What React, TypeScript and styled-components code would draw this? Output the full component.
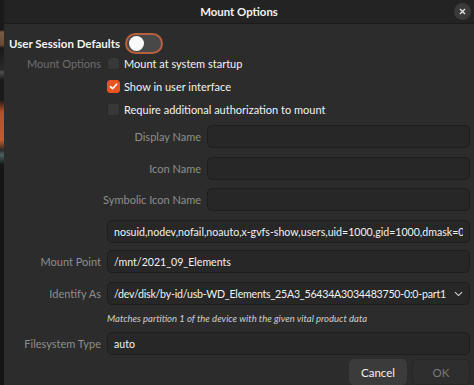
import styled, { createGlobalStyle } from "styled-components";

const Global = createGlobalStyle`
  html, body { margin: 0; padding: 0; background: #111; }
  body { font-family: Lato, "Noto Sans", sans-serif; }
`;

const Page = styled.div`
  display: flex;
  width: 474px;
  height: 385px;
  overflow: hidden;
`;

const Desktop = styled.div`
  width: 4px;
  flex: none;
  background: linear-gradient(
    to bottom,
    #1a1a1a 0px, #1a1a1a 30px,
    #7a5a40 32px, #6b4a35 45px,
    #1a1a1a 48px, #2a2a2a 70px,
    #505050 72px, #1a1a1a 80px,
    #1a1a1a 100px, #b0522a 112px,
    #c65a2b 140px, #2a2a2a 150px,
    #4a6060 155px, #151515 165px,
    #151515 100%
  );
`;

const Dialog = styled.div`
  flex: 1;
  display: flex;
  flex-direction: column;
  background: #2c2c2c;
  color: #f2f2f2;
  font-size: 11px;
`;

const Header = styled.div`
  height: 23px;
  flex: none;
  display: flex;
  align-items: center;
  justify-content: center;
  position: relative;
  background: #232323;
  border-bottom: 1px solid #1b1b1b;
  font-weight: 700;
  font-size: 11.4px;
`;

const CloseBtn = styled.div`
  position: absolute;
  right: 3px;
  top: 3px;
  width: 17px;
  height: 17px;
  border-radius: 50%;
  background: #3a3a3a;
  display: flex;
  align-items: center;
  justify-content: center;
`;

const Body = styled.div`
  display: flex;
  flex-direction: column;
  padding: 10px 4px 0 6px;
`;

const Defaults = styled.div`
  display: flex;
  align-items: center;
  gap: 7px;
  margin-left: -1px;
  height: 19px;
  font-weight: 700;
  font-size: 11.5px;
`;

const Switch = styled.div<{ $on?: boolean }>`
  width: 30px;
  height: 17px;
  border-radius: 10px;
  background: ${p => (p.$on ? "#e95420" : "#484848")};
  box-shadow: 0 0 0 2px #b8603c;
  display: flex;
  align-items: center;
  padding: 0 2px;
  justify-content: ${p => (p.$on ? "flex-end" : "flex-start")};
`;

const Knob = styled.div`
  width: 15px;
  height: 15px;
  border-radius: 50%;
  background: #fafafa;
`;

const Row = styled.div<{ $mt?: number; $h?: number }>`
  display: grid;
  grid-template-columns: 91px 94px 1fr;
  column-gap: 6px;
  align-items: center;
  margin-top: ${p => p.$mt ?? 0}px;
  height: ${p => p.$h ?? 23}px;
`;

const Label = styled.div<{ $dim?: boolean; $col?: number }>`
  grid-column: ${p => p.$col ?? 1};
  justify-self: end;
  color: ${p => (p.$dim ? "#6e6e6e" : "#8e8e8e")};
  white-space: nowrap;
`;

const Check = styled.label`
  grid-column: 2 / 4;
  display: flex;
  align-items: center;
  gap: 4px;
  white-space: nowrap;
`;

const Box = styled.span<{ $checked?: boolean }>`
  width: 11px;
  height: 11px;
  border-radius: 3px;
  background: ${p => (p.$checked ? "#e95420" : "#383838")};
  border: 1px solid ${p => (p.$checked ? "#e95420" : "#2a2a2a")};
  display: flex;
  align-items: center;
  justify-content: center;
`;

const Entry = styled.div<{ $span?: boolean }>`
  grid-column: ${p => (p.$span ? "2 / 4" : "3")};
  height: 23px;
  box-sizing: border-box;
  border-radius: 5px;
  background: #272727;
  border: 1px solid #1e1e1e;
  display: flex;
  align-items: center;
  padding: 0 6px;
  white-space: nowrap;
  overflow: hidden;
  gap: 4px;
`;

const EntryText = styled.span<{ $tight?: boolean }>`
  flex: 1;
  overflow: hidden;
  font-size: 10.6px;
  letter-spacing: ${p => (p.$tight ? "-0.22px" : "0")};
`;

const Note = styled.div`
  grid-column: 2 / 4;
  font-style: italic;
  font-size: 9.5px;
  color: #cfcfcf;
  white-space: nowrap;
`;

const Buttons = styled.div`
  display: flex;
  justify-content: flex-end;
  gap: 5px;
  margin-top: 4px;
`;

const Button = styled.div<{ $disabled?: boolean }>`
  width: 58px;
  height: 26px;
  box-sizing: border-box;
  border-radius: 5px;
  display: flex;
  align-items: center;
  justify-content: center;
  background: ${p => (p.$disabled ? "#2e2e2e" : "#3b3b3b")};
  border: 1px solid ${p => (p.$disabled ? "#262626" : "#3b3b3b")};
  color: ${p => (p.$disabled ? "#7a7a7a" : "#f2f2f2")};
  font-size: 11.5px;
`;

const Tick = () => (
  <svg width="9" height="9" viewBox="0 0 9 9">
    <path d="M1.5 4.6 L3.6 6.7 L7.6 2.2" fill="none" stroke="#fff" strokeWidth="1.6" strokeLinecap="round" strokeLinejoin="round" />
  </svg>
);

const Chevron = () => (
  <svg width="9" height="6" viewBox="0 0 9 6">
    <path d="M1 1.2 L4.5 4.6 L8 1.2" fill="none" stroke="#d8d8d8" strokeWidth="1.1" />
  </svg>
);

export default function App() {
  return (
    <Page>
      <Global />
      <Desktop />
      <Dialog>
        <Header>
          Mount Options
          <CloseBtn>
            <svg width="7" height="7" viewBox="0 0 7 7">
              <path d="M1 1 L6 6 M6 1 L1 6" stroke="#e8e8e8" strokeWidth="1.3" />
            </svg>
          </CloseBtn>
        </Header>
        <Body>
          <Defaults>
            User Session Defaults
            <Switch>
              <Knob />
            </Switch>
          </Defaults>
          <Row $mt={-1}>
            <Label $dim>Mount Options</Label>
            <Check>
              <Box />
              Mount at system startup
            </Check>
          </Row>
          <Row>
            <Check>
              <Box $checked>
                <Tick />
              </Box>
              Show in user interface
            </Check>
          </Row>
          <Row>
            <Check>
              <Box />
              Require additional authorization to mount
            </Check>
          </Row>
          <Row $mt={4}>
            <Label $col={2}>Display Name</Label>
            <Entry />
          </Row>
          <Row $mt={9}>
            <Label $col={2}>Icon Name</Label>
            <Entry />
          </Row>
          <Row $mt={8}>
            <Label $col={2}>Symbolic Icon Name</Label>
            <Entry />
          </Row>
          <Row $mt={9}>
            <Entry $span>
              <EntryText>nosuid,nodev,nofail,noauto,x-gvfs-show,users,uid=1000,gid=1000,dmask=027,fmask=137</EntryText>
            </Entry>
          </Row>
          <Row $mt={7}>
            <Label>Mount Point</Label>
            <Entry $span>
              <EntryText>/mnt/2021_09_Elements</EntryText>
            </Entry>
          </Row>
          <Row $mt={9}>
            <Label>Identify As</Label>
            <Entry $span>
              <EntryText $tight>/dev/disk/by-id/usb-WD_Elements_25A3_56434A3034483750-0:0-part1</EntryText>
              <Chevron />
            </Entry>
          </Row>
          <Row $h={27}>
            <Note>Matches partition 1 of the device with the given vital product data</Note>
          </Row>
          <Row>
            <Label>Filesystem Type</Label>
            <Entry $span>
              <EntryText>auto</EntryText>
            </Entry>
          </Row>
          <Buttons>
            <Button>Cancel</Button>
            <Button $disabled>OK</Button>
          </Buttons>
        </Body>
      </Dialog>
    </Page>
  );
}
